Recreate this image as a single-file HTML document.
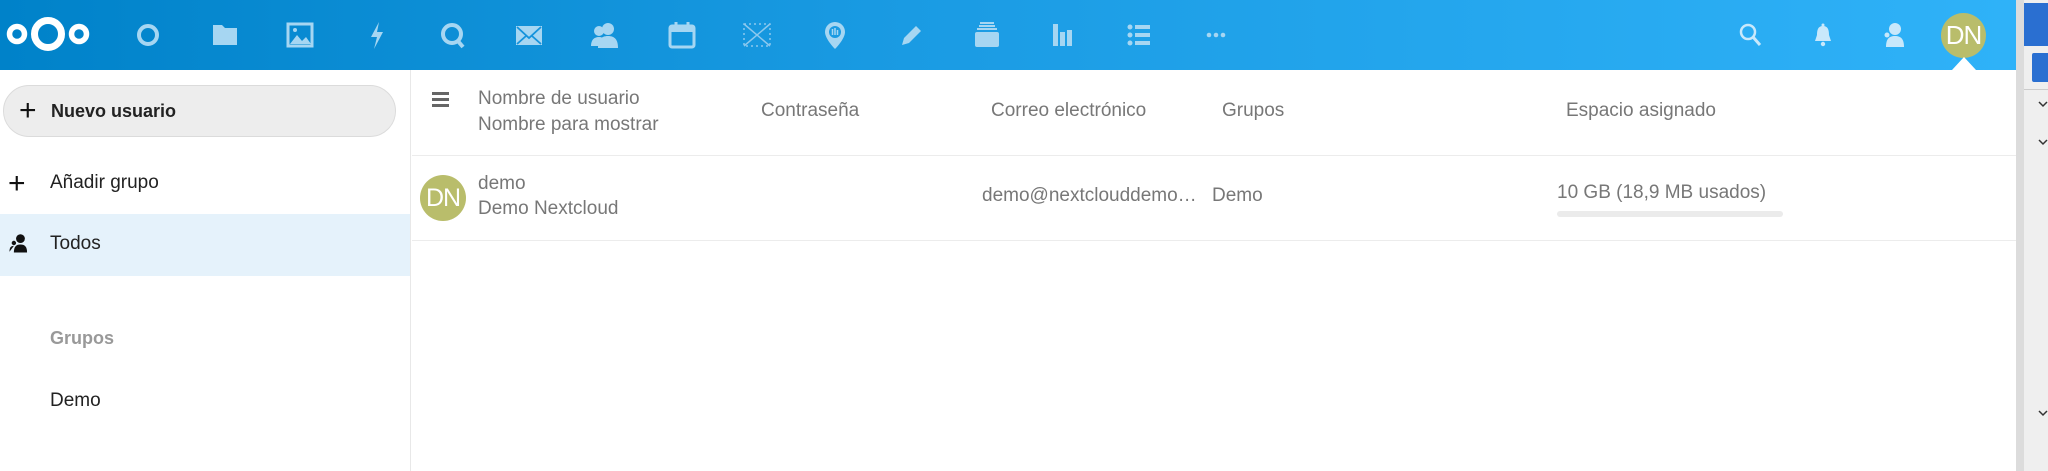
<!DOCTYPE html>
<html><head><meta charset="utf-8">
<style>
*{margin:0;padding:0;box-sizing:border-box}
body{width:2048px;height:471px;overflow:hidden;background:#fff;font-family:"Liberation Sans",sans-serif;position:relative}
#hdr{position:absolute;left:0;top:0;width:2016px;height:70px;background:linear-gradient(90deg,#0082c9 0%,#1a9be3 45%,#2fb2f8 100%)}
.ic{position:absolute;top:20px;width:30px;height:30px}
.t{position:absolute;font-size:19px;color:#777;white-space:nowrap;line-height:24px}
#side{position:absolute;left:0;top:70px;width:411px;height:401px;border-right:1px solid #e8e8e8}
.chev{position:absolute;left:2038px}
</style></head><body>
<div id="hdr">
<svg style="position:absolute;left:4px;top:13px" width="88" height="42" viewBox="0 0 88 42"><circle cx="13" cy="21" r="7.5" fill="none" stroke="#fff" stroke-width="5.5"/><circle cx="44" cy="21" r="13.5" fill="none" stroke="#fff" stroke-width="7"/><circle cx="75" cy="21" r="7.5" fill="none" stroke="#fff" stroke-width="5.5"/></svg>
<svg class="ic" style="left:133px" viewBox="0 0 30 30"><circle cx="15" cy="15" r="9" fill="none" stroke="#a6d6f2" stroke-width="4"/></svg>
<svg class="ic" style="left:210px" viewBox="0 0 30 30"><path d="M3 5h9l3 3h12v17H3z" fill="#a6d6f2"/></svg>
<svg class="ic" style="left:285px" viewBox="0 0 30 30"><rect x="3" y="4" width="24" height="22" fill="none" stroke="#a6d6f2" stroke-width="3"/><path d="M5 24l7-9 5 6 4-4 5 7z" fill="#a6d6f2"/><circle cx="10" cy="10" r="2" fill="#a6d6f2"/></svg>
<svg class="ic" style="left:362px" viewBox="0 0 30 30"><path d="M17 2L9 17h6l-3 12 9-17h-6z" fill="#a6d6f2"/></svg>
<svg class="ic" style="left:438px" viewBox="0 0 30 30"><circle cx="14" cy="14" r="9" fill="none" stroke="#a6d6f2" stroke-width="4"/><path d="M19 20l6 7" stroke="#a6d6f2" stroke-width="4"/></svg>
<svg class="ic" style="left:514px" viewBox="0 0 30 30"><rect x="2" y="6" width="26" height="19" fill="#a6d6f2"/><path d="M3 7l12 11 12-11M3 24l9-8M27 24l-9-8" stroke="#1593dc" stroke-width="1.8" fill="none"/></svg>
<svg class="ic" style="left:590px" viewBox="0 0 30 30"><circle cx="18" cy="9" r="6" fill="#a6d6f2"/><path d="M8 28c0-8 3-12 10-12s10 4 10 12z" fill="#a6d6f2"/><circle cx="9" cy="11" r="5" fill="#a6d6f2"/><path d="M1 26c0-6 3-9 8-9s6 3 6 9z" fill="#a6d6f2"/></svg>
<svg class="ic" style="left:667px" viewBox="0 0 30 30"><rect x="3" y="6" width="24" height="21" rx="2" fill="none" stroke="#a6d6f2" stroke-width="3"/><rect x="3" y="6" width="24" height="6" fill="#a6d6f2"/><path d="M9 2v6M21 2v6" stroke="#a6d6f2" stroke-width="3"/></svg>
<svg class="ic" style="left:742px" viewBox="0 0 30 30"><path d="M2 4l26 22M28 4L2 26" stroke="#8cc8ee" stroke-width="1.5"/><path d="M2 4h26v22H2z" fill="none" stroke="#8cc8ee" stroke-width="1.5" stroke-dasharray="2 3"/></svg>
<svg class="ic" style="left:820px" viewBox="0 0 30 30"><path d="M15 2a10 10 0 0 0-10 10c0 7 10 17 10 17s10-10 10-17A10 10 0 0 0 15 2z" fill="#a6d6f2"/><circle cx="15" cy="12" r="6" fill="#1a9be3"/><path d="M12.5 9v6M15 8v7M17.5 10v5" stroke="#a6d6f2" stroke-width="1.5"/></svg>
<svg class="ic" style="left:897px" viewBox="0 0 30 30"><path d="M5 25l2-7L19 6l5 5-12 12z" fill="#a6d6f2"/></svg>
<svg class="ic" style="left:972px" viewBox="0 0 30 30"><rect x="3" y="12" width="24" height="15" rx="2" fill="#a6d6f2"/><path d="M5 9h20M7 6h16M8 3h14" stroke="#a6d6f2" stroke-width="2"/></svg>
<svg class="ic" style="left:1048px" viewBox="0 0 30 30"><path d="M5 4h5v22H5zM12 12h5v14h-5zM19 10h5v16h-5z" fill="#a6d6f2"/></svg>
<svg class="ic" style="left:1124px" viewBox="0 0 30 30"><circle cx="6" cy="7" r="2.5" fill="#a6d6f2"/><circle cx="6" cy="15" r="2.5" fill="#a6d6f2"/><circle cx="6" cy="23" r="2.5" fill="#a6d6f2"/><path d="M11 7h15M11 15h15M11 23h15" stroke="#a6d6f2" stroke-width="4"/></svg>
<svg class="ic" style="left:1201px" viewBox="0 0 30 30"><circle cx="8" cy="15" r="2.3" fill="#a6d6f2"/><circle cx="15" cy="15" r="2.3" fill="#a6d6f2"/><circle cx="22" cy="15" r="2.3" fill="#a6d6f2"/></svg>
<svg class="ic" style="left:1736px" viewBox="0 0 30 30"><circle cx="12" cy="12" r="7" fill="none" stroke="#c8e8fb" stroke-width="2.5"/><path d="M17 17l7 8" stroke="#c8e8fb" stroke-width="3"/></svg>
<svg class="ic" style="left:1808px" viewBox="0 0 30 30"><path d="M15 6c-5 0-6 4-6 9l-2 6h16l-2-6c0-5-1-9-6-9z" fill="#c8e8fb"/><circle cx="15" cy="24" r="2.2" fill="#c8e8fb"/><circle cx="15" cy="5" r="1.5" fill="#c8e8fb"/></svg>
<svg class="ic" style="left:1878px" viewBox="0 0 30 30"><circle cx="17" cy="9" r="6" fill="#c8e8fb"/><path d="M8 27c0-8 3-11 9-11s9 3 9 11z" fill="#c8e8fb"/><circle cx="9" cy="15" r="2.5" fill="#c8e8fb"/></svg>
<div style="position:absolute;left:1941px;top:13px;width:45px;height:45px;border-radius:50%;background:#b9bd6b;color:#fff;font-size:26px;line-height:45px;text-align:center;letter-spacing:-1px">DN</div>
<div style="position:absolute;left:1952px;top:57px;width:0;height:0;border-left:12px solid transparent;border-right:12px solid transparent;border-bottom:13px solid #fff"></div>
</div>
<div style="position:absolute;left:2016px;top:0;width:8px;height:471px;background:#dcdcdc"></div>
<div style="position:absolute;left:2024px;top:0;width:24px;height:471px;background:#efefef"></div>
<div style="position:absolute;left:2024px;top:3px;width:24px;height:43px;background:#2a6fd1"></div>
<div style="position:absolute;left:2032px;top:53px;width:16px;height:29px;background:#2a6fd1;border-radius:2px 0 0 2px"></div>
<div style="position:absolute;left:2024px;top:89px;width:24px;height:1px;background:#ccc"></div>
<svg class="chev" style="top:100px" width="10" height="8"><path d="M1 2l4 4 4-4" stroke="#333" stroke-width="1.5" fill="none"/></svg>
<svg class="chev" style="top:138px" width="10" height="8"><path d="M1 2l4 4 4-4" stroke="#333" stroke-width="1.5" fill="none"/></svg>
<svg class="chev" style="top:409px" width="10" height="8"><path d="M1 2l4 4 4-4" stroke="#333" stroke-width="1.5" fill="none"/></svg>

<div id="side">
<div style="position:absolute;left:3px;top:15px;width:393px;height:52px;border-radius:26px;background:#ededed;border:1px solid #dbdbdb"></div>
<div style="position:absolute;left:19px;top:26px;font-size:30px;color:#111;line-height:30px">+</div>
<div class="t" style="left:51px;top:29px;color:#222;font-weight:bold;font-size:18px">Nuevo usuario</div>
<div style="position:absolute;left:8px;top:99px;font-size:30px;color:#111;line-height:30px">+</div>
<div class="t" style="left:50px;top:101px;color:#222">Añadir grupo</div>
<div style="position:absolute;left:0;top:144px;width:410px;height:62px;background:#e5f2fb"></div>
<svg style="position:absolute;left:8px;top:162px" width="22" height="22" viewBox="0 0 30 30"><circle cx="17" cy="9" r="6" fill="#111"/><path d="M8 28c0-8 3-11 9-11s9 3 9 11z" fill="#111"/><circle cx="8" cy="15" r="3" fill="#111"/><path d="M2 27c0-6 2-8 6-8" fill="#111"/></svg>
<div class="t" style="left:50px;top:162px;color:#222">Todos</div>
<div class="t" style="left:50px;top:256px;color:#999;font-weight:bold;font-size:18px">Grupos</div>
<div class="t" style="left:50px;top:319px;color:#222">Demo</div>
</div>

<div style="position:absolute;left:432px;top:92px;width:17px;height:3px;background:#666;box-shadow:0 6px 0 #666,0 12px 0 #666"></div>
<div class="t" style="left:478px;top:87px">Nombre de usuario</div>
<div class="t" style="left:478px;top:113px">Nombre para mostrar</div>
<div class="t" style="left:761px;top:99px">Contraseña</div>
<div class="t" style="left:991px;top:99px">Correo electrónico</div>
<div class="t" style="left:1222px;top:99px">Grupos</div>
<div class="t" style="left:1566px;top:99px">Espacio asignado</div>
<div style="position:absolute;left:412px;top:155px;width:1604px;height:1px;background:#ececec"></div>
<div style="position:absolute;left:420px;top:175px;width:46px;height:46px;border-radius:50%;background:#b9bd6b;color:#fff;font-size:25px;line-height:46px;text-align:center;letter-spacing:-1px">DN</div>
<div class="t" style="left:478px;top:172px">demo</div>
<div class="t" style="left:478px;top:197px">Demo Nextcloud</div>
<div class="t" style="left:982px;top:184px">demo@nextclouddemo…</div>
<div class="t" style="left:1212px;top:184px">Demo</div>
<div class="t" style="left:1557px;top:181px">10 GB (18,9 MB usados)</div>
<div style="position:absolute;left:1557px;top:211px;width:226px;height:6px;border-radius:3px;background:#ebebeb"></div>
<div style="position:absolute;left:412px;top:240px;width:1604px;height:1px;background:#ececec"></div>
</body></html>
